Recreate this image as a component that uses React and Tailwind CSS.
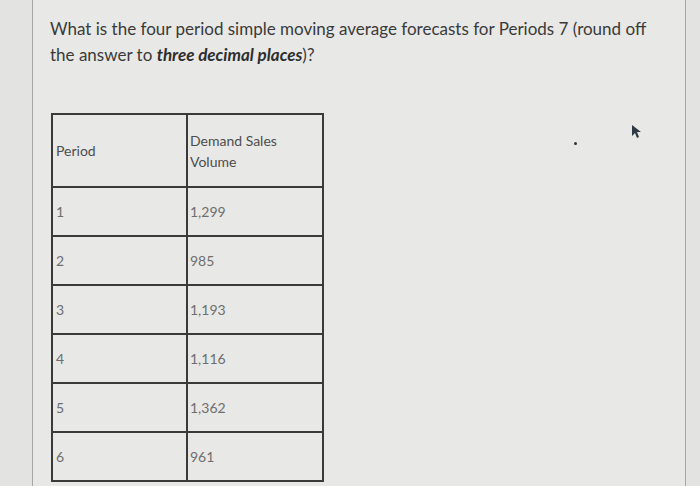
import React from "react";

const rows = [
  ["1", "1,299"],
  ["2", "985"],
  ["3", "1,193"],
  ["4", "1,116"],
  ["5", "1,362"],
  ["6", "961"],
];

// ─── Table row ────────────────────────────────────────────────────────────────
function Row({ period, value }) {
  return (
    <tr className="h-[49px]">
      <td className="border-2 border-[#3a3a3a] pl-[3px] align-middle text-[#6e6e6e]">
        {period}
      </td>
      <td className="border-2 border-[#3a3a3a] pl-[2px] align-middle text-[#6e6e6e]">
        {value}
      </td>
    </tr>
  );
}

export default function App() {
  return (
    <div
      className="relative w-[700px] h-[486px] overflow-hidden bg-[#e6e6e4] flex"
      style={{ fontFamily: "Lato, 'Open Sans', sans-serif" }}
    >
      <div className="w-[32px] shrink-0 bg-[#e3e3e1]" />
      <div className="w-[654px] shrink-0 border-l border-r border-[#a5a5a3] bg-[#e8e8e6] pl-[17px] pt-[16px]">
        <p className="text-[17px] leading-[26px] text-[#3a3a3a] whitespace-nowrap">
          What is the four period simple moving average forecasts for Periods 7 (round off
          <br />
          the answer to <b className="italic font-bold text-[#2e2e2e]">three decimal places</b>)?
        </p>

        <table className="mt-[45px] ml-[1px] border-collapse text-[14px] leading-[21px]">
          <tbody>
            <tr className="h-[73px]">
              <td className="w-[135px] border-2 border-[#3a3a3a] pl-[3px] align-middle text-[#4d4d4d]">
                Period
              </td>
              <td className="w-[136px] border-2 border-[#3a3a3a] pl-[2px] align-middle text-[#4d4d4d]">
                Demand Sales
                <br />
                Volume
              </td>
            </tr>
            {rows.map(([p, v]) => (
              <Row key={p} period={p} value={v} />
            ))}
          </tbody>
        </table>
      </div>
      <div className="flex-1 bg-[#e3e3e1]" />

      {/* stray marks on the screen */}
      <div className="absolute left-[574px] top-[142px] w-[3px] h-[3px] rounded-full bg-[#333]" />
      <svg
        className="absolute left-[631px] top-[124px]"
        width="12"
        height="16"
        viewBox="0 0 12 16"
      >
        <path d="M1 1 L1 12 L4 9 L6 14 L8 13 L6 8 L10 8 Z" fill="#2f3a44" />
      </svg>
    </div>
  );
}
